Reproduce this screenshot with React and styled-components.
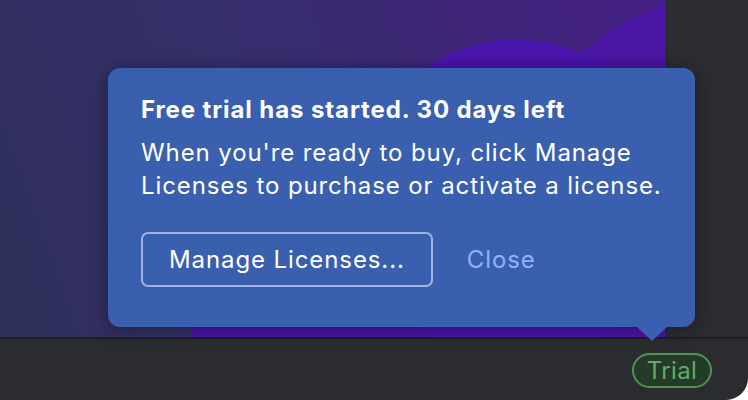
import React from "react";
import styled, { createGlobalStyle } from "styled-components";

const GlobalStyle = createGlobalStyle`
  html, body {
    margin: 0;
    padding: 0;
    background: #ffffff;
  }
  body {
    font-family: Inter, "Noto Sans", sans-serif;
    -webkit-font-smoothing: antialiased;
  }
`;

const Window = styled.div`
  position: relative;
  width: 748px;
  height: 400px;
  display: flex;
  flex-direction: column;
  background: #2b2c30;
  border-bottom-right-radius: 22px;
  overflow: hidden;
`;

const Main = styled.div`
  display: flex;
  height: 337px;
`;

// wallpaper: dark gradient with a few soft purple discs
const Wallpaper = styled.div`
  width: 666px;
  height: 100%;
  background:
    radial-gradient(circle at 517px 200px, #4a15aa 0 160px, transparent 161px),
    radial-gradient(circle at 470px 420px, #4914a8 0 292px, transparent 293px),
    radial-gradient(circle at 730px 210px, #4a16a3 0 215px, transparent 216px),
    radial-gradient(circle at 790px 230px, #5610c8 0 220px, transparent 221px),
    linear-gradient(70deg, #2e2f5a 0%, #35306a 40%, #3f2478 75%, #452084 100%);
`;

const SideStrip = styled.div`
  flex: 1;
  background: #2c2d31;
  border-left: 1px solid #232427;
`;

const StatusBar = styled.div`
  flex: 1;
  display: flex;
  align-items: center;
  justify-content: flex-end;
  padding: 0 36px 0 0;
  border-top: 2px solid #1e1f22;
`;

const TrialBadge = styled.span`
  display: inline-flex;
  align-items: center;
  justify-content: center;
  box-sizing: border-box;
  width: 80px;
  height: 35px;
  border: 2px solid #4e9553;
  border-radius: 18px;
  background: #263a29;
  color: #5fae66;
  font-size: 24px;
  letter-spacing: 0.4px;
  margin-top: 2px;
`;

const Popover = styled.div`
  position: absolute;
  left: 108px;
  top: 68px;
  width: 587px;
  height: 259px;
  box-sizing: border-box;
  padding: 27px 33px 0;
  background: #3a5fae;
  border-radius: 12px;
  box-shadow: 0 2px 18px rgba(10, 10, 30, 0.45);
  color: #ffffff;
  letter-spacing: 0.9px;

  &::after {
    content: "";
    position: absolute;
    left: 529px;
    bottom: -14px;
    border-left: 15px solid transparent;
    border-right: 15px solid transparent;
    border-top: 14px solid #3a5fae;
  }
`;

const Title = styled.h3`
  margin: 0;
  font-size: 24px;
  font-weight: 700;
  line-height: 30px;
`;

const Body = styled.p`
  margin: 11px 0 0;
  font-size: 24px;
  line-height: 33px;
  color: #ffffff;
`;

const Actions = styled.div`
  display: flex;
  align-items: center;
  gap: 32px;
  margin-top: 30px;
`;

const Button = styled.button`
  box-sizing: border-box;
  height: 55px;
  padding: 0 26px;
  border: 2px solid ${(p) => (p.$ghost ? "transparent" : "#9fb3de")};
  border-radius: 7px;
  background: transparent;
  color: ${(p) => (p.$ghost ? "#8fb3f6" : "#ffffff")};
  font-family: inherit;
  font-size: 24px;
  letter-spacing: inherit;
  cursor: pointer;
  ${(p) => p.$ghost && "padding: 0;"}
`;

export default function App() {
  return (
    <>
      <GlobalStyle />
      <Window>
        <Main>
          <Wallpaper />
          <SideStrip />
        </Main>
        <StatusBar>
          <TrialBadge>Trial</TrialBadge>
        </StatusBar>
        <Popover>
          <Title>Free trial has started. 30 days left</Title>
          <Body>
            When you're ready to buy, click Manage
            <br />
            Licenses to purchase or activate a license.
          </Body>
          <Actions>
            <Button>Manage Licenses...</Button>
            <Button $ghost>Close</Button>
          </Actions>
        </Popover>
      </Window>
    </>
  );
}
